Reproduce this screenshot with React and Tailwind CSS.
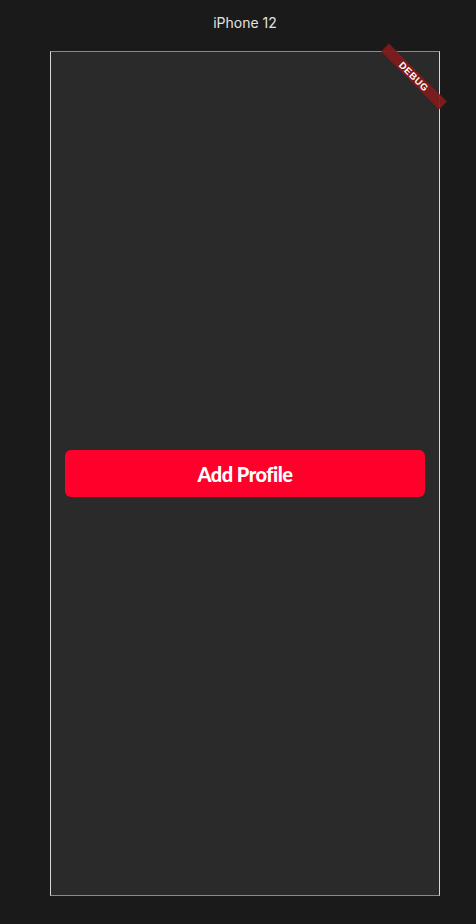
import React from 'react';

const DebugBanner = () => (
  <div className="pointer-events-none absolute left-[322px] top-[19px] flex h-[11px] w-[82px] rotate-45 items-center justify-center bg-[#7f1a1a]/95">
    <span className="text-[9.5px] leading-none font-black tracking-[0.6px] text-white" style={{ fontFamily: '"Liberation Sans", Arial, sans-serif' }}>
      DEBUG
    </span>
  </div>
);

const App = () => {
  return (
    <div className="h-[924px] w-full overflow-hidden bg-[#1a1a1a] pl-[50px]" style={{ fontFamily: 'Inter, "Noto Sans", sans-serif' }}>
      <div className="flex w-[390px] flex-col">
        <div className="flex h-[51px] items-center justify-center pb-[6px] text-[14px] text-[#e2e2e2]">
          iPhone 12
        </div>
        <div className="relative flex h-[845px] w-[390px] items-center border border-[#d8d8d8] border-t-[#8a8a8a] border-b-[#8a8a8a] bg-[#2a2a2a] px-[14px]">
          <button className="flex h-[47px] w-full items-center justify-center rounded-[6px] bg-[#ff002b] pt-[1px] text-[20px] font-black tracking-[-0.5px] text-white" style={{ fontFamily: 'Lato, sans-serif' }}>
            Add Profile
          </button>
          <DebugBanner />
        </div>
      </div>
    </div>
  );
};

export default App;
